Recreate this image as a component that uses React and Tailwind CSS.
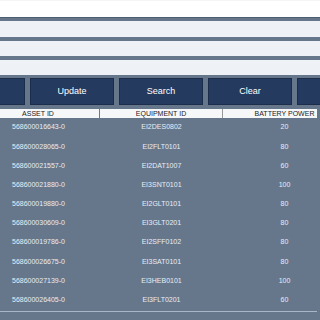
import React from "react";

const rows = [
  ["568600016643-0", "EI2DES0802", "20"],
  ["568600028065-0", "EI2FLT0101", "80"],
  ["568600021557-0", "EI2DAT1007", "60"],
  ["568600021880-0", "EI3SNT0101", "100"],
  ["568600019880-0", "EI2GLT0101", "80"],
  ["568600030609-0", "EI3GLT0201", "80"],
  ["568600019786-0", "EI2SFF0102", "80"],
  ["568600026675-0", "EI3SAT0101", "80"],
  ["568600027139-0", "EI3HEB0101", "100"],
  ["568600026405-0", "EI3FLT0201", "60"],
];

export default function App() {
  return (
    <div
      className="w-[320px] h-[320px] overflow-hidden bg-[#66778c] flex flex-col"
      style={{ fontFamily: '"Liberation Sans", Arial, sans-serif' }}
    >
      <div className="h-[17px] bg-white shrink-0 border-t border-t-[#f4f5f7]" />
      <div className="flex flex-col gap-[4px] pt-[3px] border-t border-t-[#4f5d70] shrink-0">
        <div className="h-[16px] bg-[#eef1f6]" />
        <div className="h-[15px] bg-[#eef1f6]" />
        <div className="h-[15px] bg-[#eef1f6]" />
      </div>
      <div className="flex gap-[5px] ml-[-59px] mt-[3px] shrink-0">
        {["Add", "Update", "Search", "Clear", "Delete"].map((t, i) => (
          <div
            key={i}
            className="w-[84px] h-[27px] shrink-0 bg-[#243a5e] border border-[#1b2d4a] text-white text-[9px] flex items-center justify-center"
          >
            {i === 0 || i === 4 ? "" : t}
          </div>
        ))}
      </div>
      <div className="mt-[4px] w-[317px] overflow-hidden border-b border-b-[#aab6c6] shrink-0 h-[203px]">
        <div className="ml-[-23px] w-[369px]">
          <div className="flex h-[9px] bg-[#f6f7f9] text-[7px] leading-[9px] text-[#222]">
            <div className="w-[123px] text-center border-r border-r-[#777]">ASSET ID</div>
            <div className="w-[123px] text-center border-r border-r-[#999]">EQUIPMENT ID</div>
            <div className="w-[123px] text-center">BATTERY POWER</div>
          </div>
          {rows.map((r, i) => (
            <div
              key={i}
              className="flex h-[19.2px] items-center text-[7px] text-[#e8edf4]"
            >
              <div className="w-[123px] text-center">{r[0]}</div>
              <div className="w-[123px] text-center">{r[1]}</div>
              <div className="w-[123px] text-center">{r[2]}</div>
            </div>
          ))}
        </div>
      </div>
    </div>
  );
}
